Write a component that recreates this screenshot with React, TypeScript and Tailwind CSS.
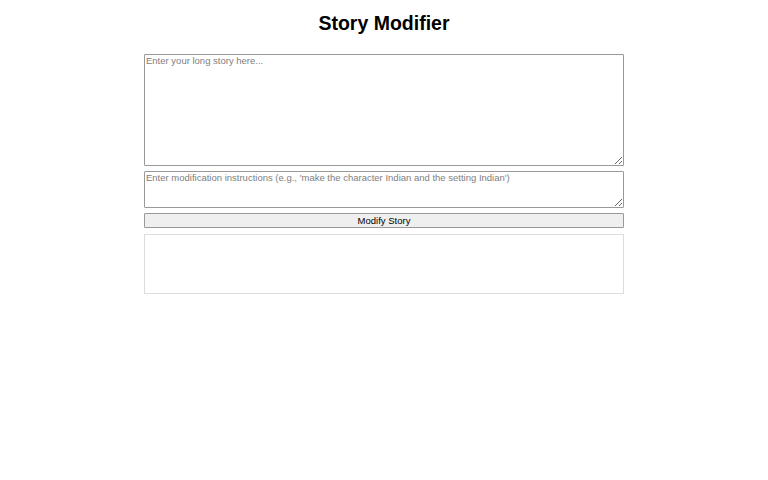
import { useState } from "react"

export default function App() {
  const [story, setStory] = useState("")
  const [instructions, setInstructions] = useState("")
  const [result, setResult] = useState("")

  const modify = () => {
    // placeholder until the API call is wired up
    setResult(story)
  }

  return (
    <div className="min-h-screen bg-white font-['Liberation_Sans',Arial,sans-serif] text-black">
      <h1 className="pt-[12px] text-center text-[19.5px] font-bold leading-[23px]">Story Modifier</h1>
      <div className="mx-auto mt-[19px] flex w-[480px] flex-col">
        <textarea
          className="h-[112px] w-full rounded-[1px] border border-[#999] px-[1px] py-0 text-[9.5px] leading-[12px] placeholder:text-[#808080]"
          placeholder="Enter your long story here..."
          value={story}
          onChange={(e) => setStory(e.target.value)}
        />
        <textarea
          className="mt-[5px] h-[37px] w-full rounded-[1px] border border-[#999] px-[1px] py-0 text-[9.5px] leading-[12px] placeholder:text-[#808080]"
          placeholder="Enter modification instructions (e.g., 'make the character Indian and the setting Indian')"
          value={instructions}
          onChange={(e) => setInstructions(e.target.value)}
        />
        <button
          className="mt-[5px] h-[15px] w-full rounded-[1px] border border-[#999] bg-[#efefef] text-[9.5px] leading-[13px]"
          onClick={modify}
        >
          Modify Story
        </button>
        <div className="mt-[6px] h-[60px] w-full border border-[#ddd] p-[5px] text-[9.5px]">{result}</div>
      </div>
    </div>
  )
}
